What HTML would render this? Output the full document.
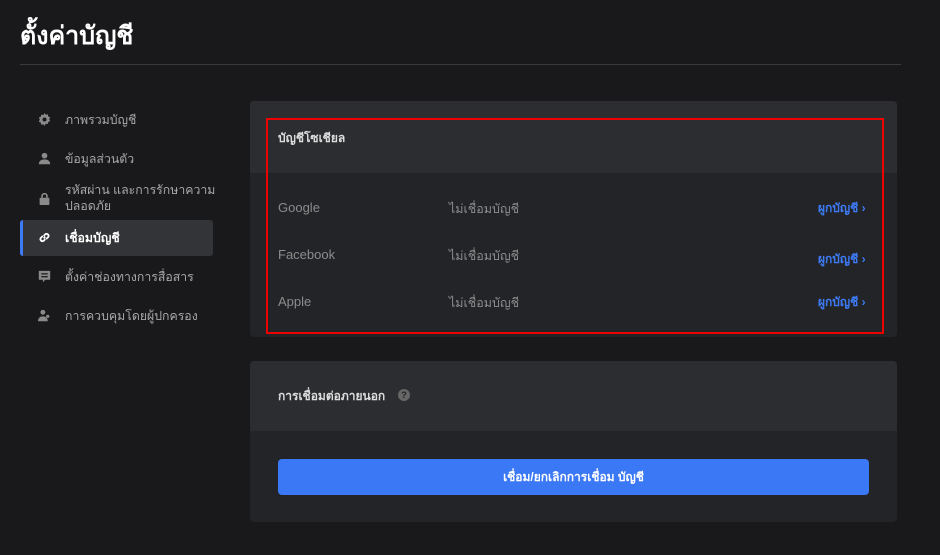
<!DOCTYPE html>
<html><head><meta charset="utf-8"><style>
*{margin:0;padding:0;box-sizing:border-box}
body{width:940px;height:555px;background:#19191b;font-family:"Liberation Sans","Noto Sans CJK SC",sans-serif;color:#aaa;position:relative;overflow:hidden}
.a{position:absolute}
h1{position:absolute;left:20px;top:16px;font-size:25px;color:#fff;font-weight:bold}
.hr{left:20px;top:64px;width:881px;height:1px;background:#3a3a3c}
.it{position:absolute;left:65px;font-size:12.3px;color:#a8a8a8;line-height:16px}
.ic{position:absolute;left:38px;width:13px;height:13px;fill:#8a8a8a}
.card{position:absolute;left:250px;width:647px;background:#232427;border-radius:4px;overflow:hidden}
.hd{background:#2c2d31}
.lbl{position:absolute;font-size:13px;color:#8c8c8c}
.lnk{position:absolute;font-size:12px;color:#3d7bf5;font-weight:bold}
</style></head><body>
<h1>ตั้งค่าบัญชี</h1>
<div class="a hr"></div>

<svg class="ic" style="top:113px" viewBox="0 0 16 16"><path d="M8 0l1.5 2.2 2.6-.6.4 2.6 2.5 1-1.2 2.4 1.2 2.4-2.5 1-.4 2.6-2.6-.6L8 16l-1.5-2.2-2.6.6-.4-2.6-2.5-1L2.2 8 1 5.6l2.5-1 .4-2.6 2.6.6z"/><circle cx="8" cy="8" r="2.5" fill="#19191b"/></svg>
<div class="it" style="top:112px">ภาพรวมบัญชี</div>
<svg class="ic" style="top:152px" viewBox="0 0 16 16"><circle cx="8" cy="4.5" r="3.5"/><path d="M1 15c0-4 3-6 7-6s7 2 7 6z"/></svg>
<div class="it" style="top:151px">ข้อมูลส่วนตัว</div>
<svg class="ic" style="top:192px" viewBox="0 0 16 16"><path d="M4 7V5a4 4 0 018 0v2h-2V5a2 2 0 00-4 0v2z"/><rect x="2" y="7" width="12" height="9" rx="1"/></svg>
<div class="it" style="top:182px">รหัสผ่าน และการรักษาความ<br>ปลอดภัย</div>
<div class="a" style="left:20px;top:220px;width:193px;height:36px;background:#333437;border-radius:3px;border-left:3px solid #3d7bf5"></div>
<svg class="ic" style="top:231px;fill:none;stroke:#fff;stroke-width:2.2" viewBox="0 0 16 16"><path d="M7 9l2-2M6 6l-2.5 2.5a2.5 2.5 0 003.5 3.5L9 10M10 10l2.5-2.5a2.5 2.5 0 00-3.5-3.5L7 6"/></svg>
<div class="it" style="top:230px;color:#fff;font-weight:bold">เชื่อมบัญชี</div>
<svg class="ic" style="top:270px" viewBox="0 0 16 16"><path d="M1 1h14v11H9l-3 3v-3H1z"/><rect x="4" y="4" width="8" height="1.5" fill="#19191b"/><rect x="4" y="7.5" width="8" height="1.5" fill="#19191b"/></svg>
<div class="it" style="top:269px">ตั้งค่าช่องทางการสื่อสาร</div>
<svg class="ic" style="top:309px" viewBox="0 0 16 16"><circle cx="6" cy="4" r="3"/><path d="M0 15c0-4 2.5-6 6-6s6 2 6 6z"/><circle cx="12" cy="9" r="2"/></svg>
<div class="it" style="top:308px">การควบคุมโดยผู้ปกครอง</div>

<div class="card" style="top:101px;height:236px">
 <div class="hd" style="height:72px"></div>
</div>
<div class="a" style="left:266px;top:118px;width:618px;height:216px;border:2px solid #e00"></div>
<div class="a" style="left:278px;top:129px;font-size:12px;color:#ddd;font-weight:bold">บัญชีโซเชียล</div>
<div class="lbl" style="left:278px;top:200px">Google</div><div class="lbl" style="left:449px;top:199px;font-size:12.5px">ไม่เชื่อมบัญชี</div><div class="lnk" style="top:199px;left:818px">ผูกบัญชี ›</div>
<div class="lbl" style="left:278px;top:247px">Facebook</div><div class="lbl" style="left:449px;top:246px;font-size:12.5px">ไม่เชื่อมบัญชี</div><div class="lnk" style="top:250px;left:818px">ผูกบัญชี ›</div>
<div class="lbl" style="left:278px;top:294px">Apple</div><div class="lbl" style="left:449px;top:293px;font-size:12.5px">ไม่เชื่อมบัญชี</div><div class="lnk" style="top:293px;left:818px">ผูกบัญชี ›</div>

<div class="card" style="top:361px;height:161px">
 <div class="hd" style="height:70px"></div>
</div>
<div class="a" style="left:278px;top:387px;font-size:12px;color:#ddd;font-weight:bold">การเชื่อมต่อภายนอก</div>
<div class="a" style="left:398px;top:389px;width:12px;height:12px;border-radius:50%;background:#666;color:#222;font-size:9px;font-weight:bold;text-align:center;line-height:12px">?</div>
<div class="a" style="left:278px;top:459px;width:591px;height:36px;background:#3b78f5;border-radius:4px;color:#fff;font-weight:bold;font-size:12px;text-align:center;line-height:36px">เชื่อม/ยกเลิกการเชื่อม บัญชี</div>
</body></html>
